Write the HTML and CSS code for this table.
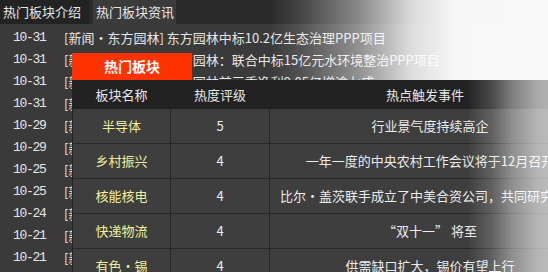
FILE: index.html
```html
<!DOCTYPE html>
<html lang="zh-CN">
<head>
<meta charset="utf-8">
<title>热门板块</title>
<link rel="stylesheet" href="styles.css">
</head>
<body>
<div class="page">
  <div class="tabs">
    <div class="tab tab-intro">热门板块介绍</div>
    <div class="tab tab-news">热门板块资讯</div>
  </div>
  <ul class="news">
    <li><span class="date">10-31</span><span class="title">[新闻·东方园林] 东方园林中标10.2亿生态治理PPP项目</span></li>
    <li><span class="date">10-31</span><span class="title">[新闻·东方园林] 东方园林：联合中标15亿元水环境整治PPP项目</span></li>
    <li><span class="date">10-31</span><span class="title">[新闻·东方园林] 东方园林前三季净利9.05亿增逾七成</span></li>
    <li><span class="date">10-31</span><span class="title">[新闻·东方园林] 东方园林签约重大生态项目</span></li>
    <li><span class="date">10-29</span><span class="title">[新闻·半导体] 半导体行业景气度持续高企</span></li>
    <li><span class="date">10-29</span><span class="title">[新闻·乡村振兴] 中央农村工作会议将于12月召开</span></li>
    <li><span class="date">10-25</span><span class="title">[新闻·核能核电] 比尔·盖茨联手成立中美合资公司</span></li>
    <li><span class="date">10-25</span><span class="title">[新闻·快递物流] “双十一”将至</span></li>
    <li><span class="date">10-24</span><span class="title">[新闻·有色] 供需缺口扩大，锡价有望上行</span></li>
    <li><span class="date">10-21</span><span class="title">[新闻·有色] 锡价持续走强</span></li>
    <li><span class="date">10-21</span><span class="title">[新闻·物流] 快递业务量大幅增长</span></li>
  </ul>
  <div class="glow"></div>

  <div class="popup">
    <div class="popup-title">热门板块</div>
    <div class="grid head">
      <div class="cell">板块名称</div>
      <div class="cell">热度评级</div>
      <div class="cell">热点触发事件</div>
    </div>
    <div class="grid body">
      <div class="cell name">半导体</div>
      <div class="cell">5</div>
      <div class="cell event">行业景气度持续高企</div>

      <div class="cell name">乡村振兴</div>
      <div class="cell">4</div>
      <div class="cell event">一年一度的中央农村工作会议将于12月召开</div>

      <div class="cell name">核能核电</div>
      <div class="cell">4</div>
      <div class="cell event">比尔·盖茨联手成立了中美合资公司，共同研究新一代核电技术</div>

      <div class="cell name">快递物流</div>
      <div class="cell">4</div>
      <div class="cell event">“双十一” 将至</div>

      <div class="cell name">有色·锡</div>
      <div class="cell">4</div>
      <div class="cell event">供需缺口扩大，锡价有望上行</div>
    </div>
    <div class="popup-glow"></div>
  </div>
</div>
</body>
</html>
```

FILE: styles.css
```css
* { box-sizing: border-box; }
html, body {
  margin: 0;
  padding: 0;
  width: 548px;
  height: 272px;
  overflow: hidden;
  background: #3a3a3a;
}
.page {
  position: relative;
  width: 548px;
  height: 272px;
  overflow: hidden;
  font-family: "Noto Sans CJK SC", "Noto Sans", sans-serif;
  font-size: 13px;
  color: #e2e2e2;
}
.tabs {
  display: flex;
  height: 24px;
  background: #2b2b2b;
  gap: 3px;
}
.tab {
  height: 24px;
  line-height: 24px;
  padding-left: 3px;
  white-space: nowrap;
  color: #e6e6e6;
}
.tab-intro { width: 90px; background: #232323; }
.tab-news { width: 83px; background: #3b3b3b; }

.news {
  list-style: none;
  margin: 0;
  padding: 3px 0 0 0;
}
.news li {
  display: flex;
  height: 22px;
  line-height: 22px;
  white-space: nowrap;
}
.date {
  width: 64px;
  padding-left: 13px;
  font-family: "Liberation Mono", monospace;
  letter-spacing: -1.3px;
  color: #e6e6e6;
}
.title { color: #e6e6e6; }

.glow {
  position: absolute;
  inset: 0;
  pointer-events: none;
  background: linear-gradient(to right,
    rgba(255,255,255,0) 270px,
    rgba(255,255,255,0.12) 300px,
    rgba(255,255,255,0.45) 360px,
    rgba(255,255,255,0.82) 410px,
    rgba(255,255,255,0.96) 455px,
    rgba(255,255,255,0.97) 548px);
}

.popup {
  position: absolute;
  left: 72px;
  top: 53px;
  width: 508px;
}
.popup-title {
  width: 120px;
  height: 27px;
  line-height: 27px;
  background: #ff3300;
  color: #ffffff;
  font-weight: bold;
  font-size: 14px;
  text-align: center;
}
.grid {
  display: grid;
  grid-template-columns: 97px 98px 1fr;
  column-gap: 1px;
  border-left: 1px solid #232323;
}
.head {
  background: #222222;
  height: 29px;
}
.head .cell {
  line-height: 29px;
  color: #e6e6e6;
}
.body {
  background: #272727;
  row-gap: 1px;
  padding-bottom: 1px;
}
.cell {
  text-align: center;
  white-space: nowrap;
  overflow: hidden;
}
.body .cell {
  height: 34px;
  line-height: 34px;
  background: #3e3e3e;
  color: #ececec;
}
.body .cell.name { color: #f0f09c; }
.body .cell.event { padding-left: 10px; }

.popup-glow {
  position: absolute;
  left: 0;
  right: 0;
  top: 27px;
  bottom: 0;
  pointer-events: none;
  background: linear-gradient(to right,
    rgba(255,255,255,0) 395px,
    rgba(255,255,255,0.18) 420px,
    rgba(255,255,255,0.42) 440px,
    rgba(255,255,255,0.62) 466px,
    rgba(255,255,255,0.72) 508px);
}
```
